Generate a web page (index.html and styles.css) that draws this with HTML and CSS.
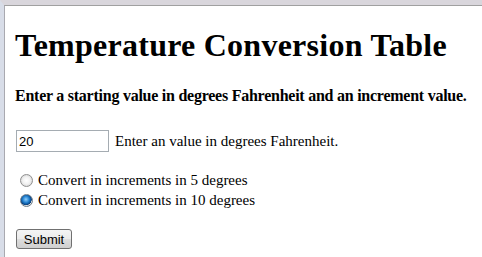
FILE: index.html
```html
<!DOCTYPE html>
<html>
<head>
<meta charset="utf-8">
<title>Temperature Conversion Table</title>
<link rel="stylesheet" href="styles.css">
</head>
<body>
<div class="frame">
  <div class="page">
    <h1 class="title">Temperature Conversion Table</h1>
    <h4 class="subtitle">Enter a starting value in degrees Fahrenheit and an increment value.</h4>
    <form class="form">
      <p class="row row-input"><input class="text-input" type="text" value="20"> Enter an value in degrees Fahrenheit.</p>
      <div class="radios">
        <label class="radio-row"><input class="radio" type="radio" name="inc" value="5"> Convert in increments in 5 degrees</label>
        <label class="radio-row"><input class="radio" type="radio" name="inc" value="10" checked> Convert in increments in 10 degrees</label>
      </div>
      <p class="row row-submit"><button class="submit" type="button">Submit</button></p>
    </form>
  </div>
</div>
</body>
</html>
```
FILE: styles.css
```css
html, body {
  margin: 0;
  padding: 0;
  background: #ffffff;
}
body {
  width: 482px;
  height: 257px;
  overflow: hidden;
  font-family: "Liberation Serif", "Times New Roman", serif;
  font-size: 15px;
  color: #000;
}
.frame {
  height: 257px;
  box-sizing: border-box;
  border-top: 5px solid #d9d6dc;
  border-left: 4px solid #d8dde8;
  background: #fff;
}
.page {
  height: 100%;
  box-sizing: border-box;
  border-top: 1px solid #a0a0a0;
  border-left: 1px solid #a9a9b0;
  padding: 1px 10px 0 10px;
}
.title {
  font-size: 32px;
  font-weight: bold;
  margin: 20px 0 0 0;
  line-height: 37px;
  letter-spacing: 0.25px;
  white-space: nowrap;
}
.subtitle {
  font-size: 16px;
  font-weight: bold;
  margin: 23px 0 0 0;
  line-height: 18px;
  letter-spacing: -0.25px;
  white-space: nowrap;
}
.form {
  margin: 0;
}
.row {
  margin: 0;
  display: flex;
  align-items: center;
  gap: 6px;
}
.row-input {
  margin-top: 25px;
}
.row-submit {
  margin-top: 20px;
}
.text-input {
  width: 93px;
  height: 22px;
  box-sizing: border-box;
  border: 1px solid #a5acb2;
  padding: 1px 2px 0 2px;
  margin: 0 0 0 1px;
  font-family: "Liberation Sans", Arial, sans-serif;
  font-size: 13px;
  color: #000;
  outline: none;
}
.radios {
  margin-top: 19px;
  display: flex;
  flex-direction: column;
  gap: 2px;
}
.radio-row {
  display: flex;
  align-items: center;
  gap: 5px;
  height: 18px;
}
.radio {
  appearance: none;
  -webkit-appearance: none;
  width: 13px;
  height: 13px;
  margin: 0 0 0 5px;
  border-radius: 50%;
  border: 1px solid #8f8f8f;
  background: radial-gradient(circle at 50% 50%, #ffffff 0, #f2f2f2 45%, #c8c8c8 100%);
  box-sizing: border-box;
}
.radio:checked {
  border-color: #6d7c8a;
  background: radial-gradient(circle at 45% 40%, #8ed0ff 0, #1a78c8 40%, #0c3f7a 62%, #e0e0e0 66%, #c8c8c8 100%);
}
.submit {
  margin: 0 0 0 1px;
  width: 56px;
  height: 20px;
  box-sizing: border-box;
  border: 1px solid #707070;
  border-radius: 3px;
  background: linear-gradient(#f4f4f4 0%, #ebebeb 48%, #dddddd 52%, #cfcfcf 100%);
  font-family: "Liberation Sans", Arial, sans-serif;
  font-size: 13px;
  color: #000;
  padding: 0;
}
```
